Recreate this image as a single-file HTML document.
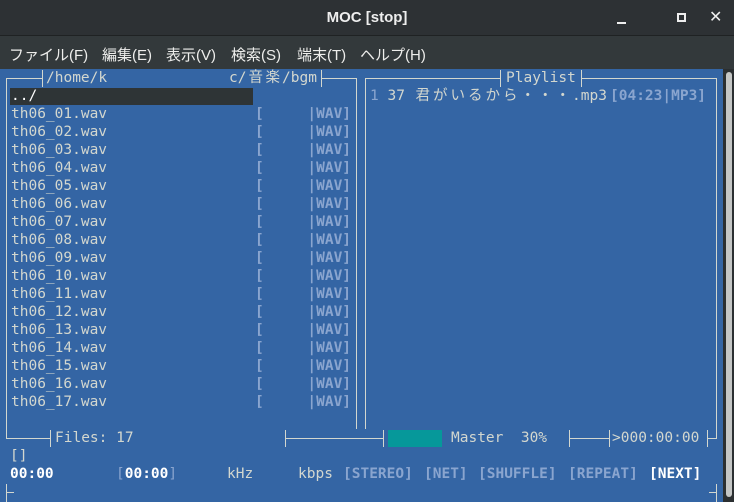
<!DOCTYPE html>
<html><head><meta charset="utf-8"><style>
*{margin:0;padding:0;box-sizing:border-box}
body{width:734px;height:502px;overflow:hidden;background:#3465a4;position:relative;font-family:"DejaVu Sans Mono","Noto Sans CJK JP",monospace;font-size:14.5px;color:#d3d7cf}
.t{position:absolute;height:18px;line-height:18px;white-space:pre}
.d{color:#8aa5cf}
.b{font-weight:bold;color:#fff}
.h{position:absolute;height:1px;background:#d3d7cf}
.v{position:absolute;width:1px;background:#d3d7cf}
.c{position:absolute;top:87px;width:17.5px;height:18px;line-height:18px;text-align:center}
#title{position:absolute;left:0;top:0;width:734px;height:36px;background:#2d3134;border-bottom:1px solid #1f2223;color:#eee;font-family:"Liberation Sans","Noto Sans CJK JP",sans-serif;font-size:15px;font-weight:bold;text-align:center;line-height:36px}
#menu{position:absolute;left:0;top:36px;width:734px;height:33px;background:#33393b;color:#eeeeec;font-family:"Liberation Sans","Noto Sans CJK JP",sans-serif;font-size:15px}
#menu span{position:absolute;top:8px}
#sb{position:absolute;left:723px;top:69px;width:11px;height:433px;background:#2b2f31}
#sb div{position:absolute;left:3px;top:3px;width:6px;height:425px;background:#c4c6c5;border-radius:3px}
.f{position:absolute;left:11px;height:18px;line-height:18px;white-space:pre}
.w{position:absolute;left:255px;height:18px;line-height:18px;white-space:pre;color:#8aa5cf;font-weight:bold}
</style></head><body>
<div id="title">MOC [stop]
<span style="position:absolute;left:617px;top:22px;width:9px;height:2px;background:#eee"></span>
<span style="position:absolute;left:677px;top:13px;width:9px;height:9px;border:2px solid #eee"></span>
<span style="position:absolute;left:709px;top:0;font-weight:normal;font-size:16px">✕</span>
</div>
<div id="menu"><span style="left:9px">ファイル(F)</span><span style="left:102px">編集(E)</span><span style="left:166px">表示(V)</span><span style="left:231px">検索(S)</span><span style="left:297px">端末(T)</span><span style="left:360px">ヘルプ(H)</span></div>
<div id="sb"><div></div></div>

<div class="h" style="left:6px;top:78px;width:36px"></div>
<div class="v" style="left:42px;top:70px;height:17px"></div>
<div class="t" style="left:46px;top:69px">/home/k</div>
<div class="t" style="left:229px;top:69px">c/</div>
<div class="t" style="left:247px;top:69px;width:17.5px;text-align:center">音</div>
<div class="t" style="left:264px;top:69px;width:17.5px;text-align:center">楽</div>
<div class="t" style="left:282px;top:69px">/bgm</div>
<div class="v" style="left:321px;top:70px;height:17px"></div>
<div class="h" style="left:321px;top:78px;width:36px"></div>
<div class="v" style="left:6px;top:78px;height:361px"></div>
<div class="v" style="left:356px;top:78px;height:351px"></div>
<div style="position:absolute;left:10px;top:88px;width:243px;height:17px;background:#2e3436"></div>
<div class="t" style="left:11px;top:87px;color:#fff">../</div>

<div class="h" style="left:365px;top:78px;width:135px"></div>
<div class="v" style="left:500px;top:70px;height:17px"></div>
<div class="t" style="left:506px;top:69px">Playlist</div>
<div class="v" style="left:581px;top:70px;height:17px"></div>
<div class="h" style="left:581px;top:78px;width:136px"></div>
<div class="v" style="left:365px;top:78px;height:351px"></div>
<div class="v" style="left:716px;top:78px;height:361px"></div>
<div class="t" style="left:370px;top:87px"><span class="d">1</span> 37 </div>
<div class="c" style="left:414px">君</div>
<div class="c" style="left:431.5px">が</div>
<div class="c" style="left:449px">い</div>
<div class="c" style="left:466.5px">る</div>
<div class="c" style="left:484px">か</div>
<div class="c" style="left:501.5px">ら</div>
<div class="c" style="left:519px">・</div>
<div class="c" style="left:536.5px">・</div>
<div class="c" style="left:554px">・</div>
<div class="t" style="left:572px;top:87px">.mp3</div>
<div class="t d" style="left:610px;top:87px;font-weight:bold">[04:23|MP3]</div>

<div class="f" style="top:105px">th06_01.wav</div><div class="w" style="top:105px">[     |WAV]</div>
<div class="f" style="top:123px">th06_02.wav</div><div class="w" style="top:123px">[     |WAV]</div>
<div class="f" style="top:141px">th06_03.wav</div><div class="w" style="top:141px">[     |WAV]</div>
<div class="f" style="top:159px">th06_04.wav</div><div class="w" style="top:159px">[     |WAV]</div>
<div class="f" style="top:177px">th06_05.wav</div><div class="w" style="top:177px">[     |WAV]</div>
<div class="f" style="top:195px">th06_06.wav</div><div class="w" style="top:195px">[     |WAV]</div>
<div class="f" style="top:213px">th06_07.wav</div><div class="w" style="top:213px">[     |WAV]</div>
<div class="f" style="top:231px">th06_08.wav</div><div class="w" style="top:231px">[     |WAV]</div>
<div class="f" style="top:249px">th06_09.wav</div><div class="w" style="top:249px">[     |WAV]</div>
<div class="f" style="top:267px">th06_10.wav</div><div class="w" style="top:267px">[     |WAV]</div>
<div class="f" style="top:285px">th06_11.wav</div><div class="w" style="top:285px">[     |WAV]</div>
<div class="f" style="top:303px">th06_12.wav</div><div class="w" style="top:303px">[     |WAV]</div>
<div class="f" style="top:321px">th06_13.wav</div><div class="w" style="top:321px">[     |WAV]</div>
<div class="f" style="top:339px">th06_14.wav</div><div class="w" style="top:339px">[     |WAV]</div>
<div class="f" style="top:357px">th06_15.wav</div><div class="w" style="top:357px">[     |WAV]</div>
<div class="f" style="top:375px">th06_16.wav</div><div class="w" style="top:375px">[     |WAV]</div>
<div class="f" style="top:393px">th06_17.wav</div><div class="w" style="top:393px">[     |WAV]</div>

<div class="h" style="left:6px;top:438px;width:44px"></div>
<div class="v" style="left:50px;top:430px;height:17px"></div>
<div class="t" style="left:55px;top:429px">Files: 17</div>
<div class="v" style="left:285px;top:430px;height:17px"></div>
<div class="h" style="left:285px;top:438px;width:98px"></div>
<div class="v" style="left:383px;top:430px;height:17px"></div>
<div style="position:absolute;left:388px;top:430px;width:54px;height:17px;background:#06989a"></div>
<div class="t" style="left:451px;top:429px">Master  30%</div>
<div class="v" style="left:569px;top:430px;height:17px"></div>
<div class="h" style="left:569px;top:438px;width:40px"></div>
<div class="v" style="left:609px;top:430px;height:17px"></div>
<div class="t" style="left:612px;top:429px">&gt;000:00:00</div>
<div class="v" style="left:707px;top:430px;height:17px"></div>
<div class="h" style="left:707px;top:438px;width:10px"></div>

<div class="t" style="left:10px;top:447px">[]</div>
<div class="t b" style="left:10px;top:465px">00:00</div>
<div class="t" style="left:116px;top:465px"><span class="d">[</span><b style="color:#fff">00:00</b><span class="d">]</span></div>
<div class="t" style="left:227px;top:465px">kHz</div>
<div class="t" style="left:298px;top:465px">kbps</div>
<div class="t d" style="left:343px;top:465px;font-weight:bold">[STEREO]</div>
<div class="t d" style="left:424px;top:465px;font-weight:bold">[NET]</div>
<div class="t d" style="left:478px;top:465px;font-weight:bold">[SHUFFLE]</div>
<div class="t d" style="left:568px;top:465px;font-weight:bold">[REPEAT]</div>
<div class="t b" style="left:649px;top:465px">[NEXT]</div>

<div class="v" style="left:6px;top:484px;height:18px"></div>
<div class="h" style="left:6px;top:492px;width:8px"></div>
<div class="v" style="left:716px;top:484px;height:18px"></div>
<div class="h" style="left:709px;top:492px;width:8px"></div>
</body></html>
